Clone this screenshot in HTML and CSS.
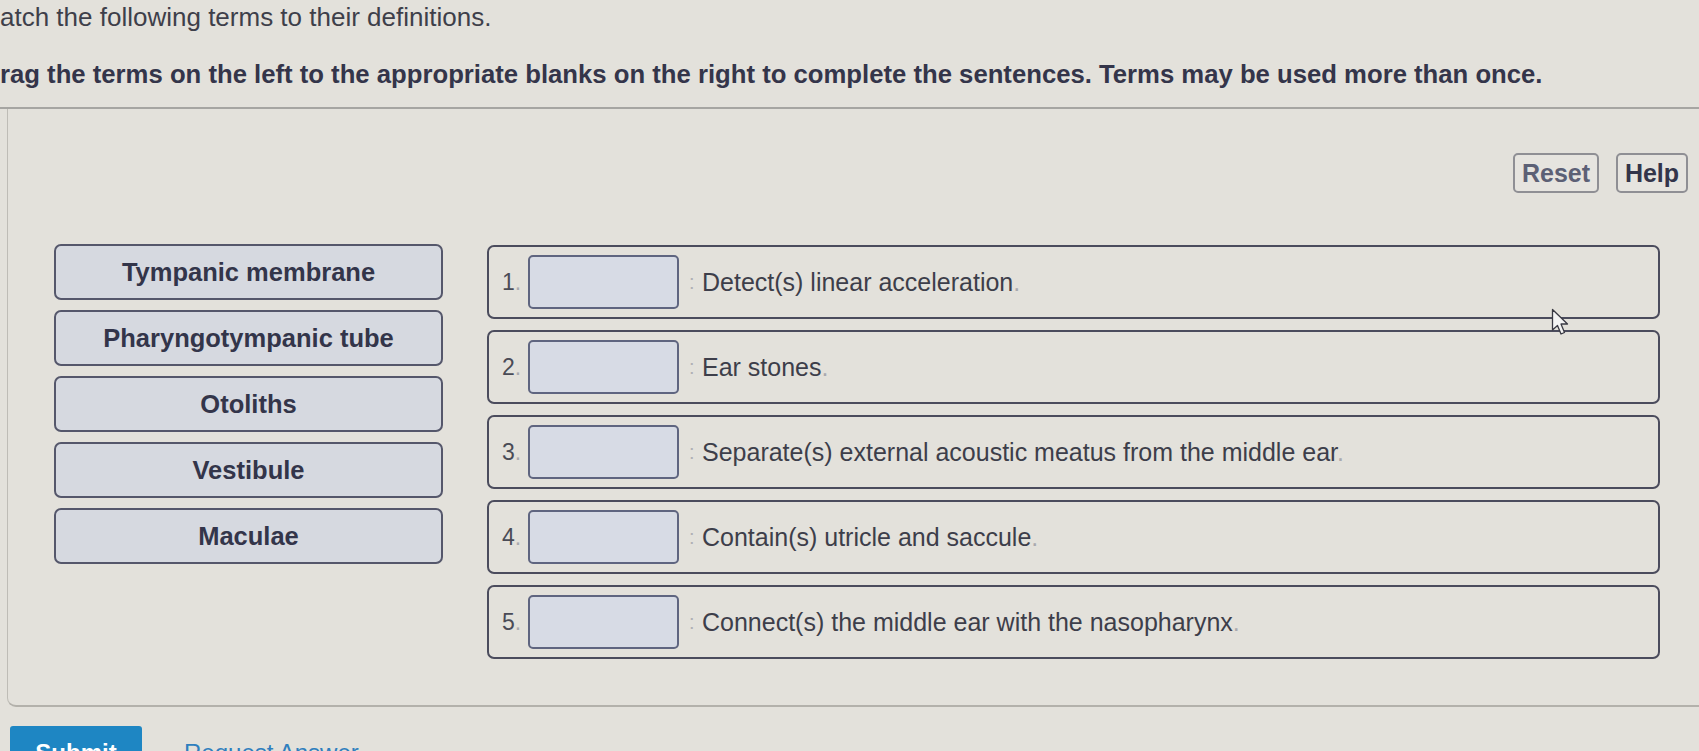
FILE: index.html
```html
<!DOCTYPE html>
<html lang="en">
<head>
<meta charset="utf-8">
<title>Match the following terms</title>
<link rel="stylesheet" href="styles.css">
</head>
<body>
<div class="page">
  <p class="intro">atch the following terms to their definitions.</p>
  <p class="task">rag the terms on the left to the appropriate blanks on the right to complete the sentences. Terms may be used more than once.</p>
  <div class="rule"></div>

  <section class="panel">
    <div class="toolbar">
      <button class="btn btn-reset">Reset</button>
      <button class="btn btn-help">Help</button>
    </div>

    <div class="board">
      <div class="terms">
        <div class="term">Tympanic membrane</div>
        <div class="term">Pharyngotympanic tube</div>
        <div class="term">Otoliths</div>
        <div class="term">Vestibule</div>
        <div class="term">Maculae</div>
      </div>

      <ol class="rows">
        <li class="row"><span class="num">1<span class="dot">.</span></span><span class="drop"></span><span class="colon">:</span><span class="def">Detect(s) linear acceleration<span class="dot">.</span></span></li>
        <li class="row"><span class="num">2<span class="dot">.</span></span><span class="drop"></span><span class="colon">:</span><span class="def">Ear stones<span class="dot">.</span></span></li>
        <li class="row"><span class="num">3<span class="dot">.</span></span><span class="drop"></span><span class="colon">:</span><span class="def">Separate(s) external acoustic meatus from the middle ear<span class="dot">.</span></span></li>
        <li class="row"><span class="num">4<span class="dot">.</span></span><span class="drop"></span><span class="colon">:</span><span class="def">Contain(s) utricle and saccule<span class="dot">.</span></span></li>
        <li class="row"><span class="num">5<span class="dot">.</span></span><span class="drop"></span><span class="colon">:</span><span class="def">Connect(s) the middle ear with the nasopharynx<span class="dot">.</span></span></li>
      </ol>
    </div>

    <svg class="cursor" width="20" height="28" viewBox="0 0 20 28" aria-hidden="true">
      <path d="M1.5 1.5 L1.5 22 L6.5 17.5 L10 26 L13.5 24.5 L10 16 L16.5 16 Z" fill="#f4f4f4" stroke="#3a3a44" stroke-width="1.3" stroke-linejoin="round"/>
    </svg>
  </section>

  <div class="actions">
    <button class="submit">Submit</button>
    <a class="request" href="#">Request Answer</a>
  </div>
</div>
</body>
</html>
```

FILE: styles.css
```css
html, body {
  margin: 0;
  padding: 0;
}

body {
  width: 1699px;
  height: 751px;
  overflow: hidden;
  background: #e3e1db;
  font-family: "Liberation Sans", Arial, sans-serif;
  color: #3a3b4a;
}

.page {
  display: flex;
  flex-direction: column;
}

.intro {
  margin: 2px 0 0 0;
  font-size: 26px;
  line-height: 30px;
  color: #3e3f4a;
}

.task {
  margin: 27px 0 0 0;
  font-size: 25.7px;
  line-height: 30px;
  font-weight: bold;
  color: #34354a;
  white-space: nowrap;
}

.rule {
  margin-top: 18px;
  height: 2px;
  background: #a6a5a2;
}

.panel {
  position: relative;
  margin-left: 7px;
  border-left: 1px solid #bebcb6;
  border-bottom: 2px solid #b3b1ab;
  border-bottom-left-radius: 9px;
  padding: 44px 11px 46px 0;
}

.toolbar {
  display: flex;
  justify-content: flex-end;
  gap: 17px;
}

.btn {
  height: 40px;
  padding: 0;
  border: 2px solid #8f8f94;
  border-radius: 5px;
  background: #e6e4df;
  font-family: "Liberation Sans", Arial, sans-serif;
  font-size: 25px;
  font-weight: bold;
  line-height: 36px;
}

.btn-reset {
  width: 86px;
  color: #5c6075;
}

.btn-help {
  width: 72px;
  color: #33354a;
}

.board {
  display: flex;
  align-items: flex-start;
  margin-top: 51px;
  padding-left: 46px;
}

.terms {
  display: flex;
  flex-direction: column;
  gap: 10px;
  width: 389px;
}

.term {
  height: 56px;
  box-sizing: border-box;
  display: flex;
  align-items: center;
  justify-content: center;
  border: 2px solid #55576b;
  border-radius: 7px;
  background: #d6d9e0;
  font-size: 25.5px;
  font-weight: bold;
  color: #33354a;
}

.rows {
  list-style: none;
  margin: 1px 0 0 44px;
  padding: 0;
  width: 1173px;
  display: flex;
  flex-direction: column;
  gap: 11px;
}

.row {
  height: 74px;
  box-sizing: border-box;
  display: flex;
  align-items: center;
  border: 2px solid #4b4c5d;
  border-radius: 7px;
  padding-left: 13px;
}

.num {
  width: 26px;
  font-size: 23px;
  color: #4a4b56;
}

.dot {
  color: #a9a9ae;
}

.drop {
  width: 151px;
  height: 54px;
  box-sizing: border-box;
  border: 2px solid #5f6580;
  border-radius: 5px;
  background: #d7dbe5;
}

.colon {
  margin-left: 10px;
  width: 13px;
  font-size: 20px;
  color: #b0b0b4;
}

.def {
  font-size: 25px;
  color: #3d3e4a;
}

.cursor {
  position: absolute;
  left: 1543px;
  top: 199px;
}

.actions {
  display: flex;
  align-items: flex-start;
  gap: 42px;
  margin-top: 19px;
  padding-left: 10px;
}

.submit {
  width: 132px;
  height: 44px;
  padding: 12px 0 0 0;
  border: none;
  border-radius: 3px;
  background: #1e86c3;
  color: #ffffff;
  font-family: "Liberation Sans", Arial, sans-serif;
  font-size: 24px;
  font-weight: bold;
  line-height: 30px;
  display: flex;
  justify-content: center;
  align-items: flex-start;
}

.request {
  padding-top: 12px;
  font-size: 24px;
  line-height: 30px;
  color: #2f7fbe;
  text-decoration: none;
}
```
